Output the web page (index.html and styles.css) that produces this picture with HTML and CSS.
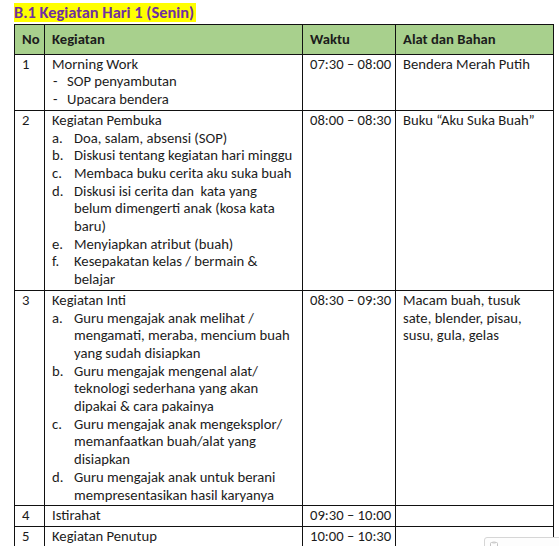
FILE: index.html
```html
<!DOCTYPE html>
<html lang="id">
<head>
<meta charset="utf-8">
<title>B.1 Kegiatan Hari 1 (Senin)</title>
<link rel="stylesheet" href="styles.css">
</head>
<body>
<div class="page">
  <h2 class="title"><span class="hl">B.1 Kegiatan Hari 1 (Senin)</span></h2>
  <table class="sched">
    <colgroup>
      <col class="c-no"><col class="c-keg"><col class="c-wkt"><col class="c-alat">
    </colgroup>
    <thead>
      <tr><th>No</th><th>Kegiatan</th><th>Waktu</th><th>Alat dan Bahan</th></tr>
    </thead>
    <tbody>
      <tr>
        <td>1</td>
        <td>
          <div class="line">Morning Work</div>
          <div class="item dash"><span class="mk">-</span><span class="tx">SOP penyambutan</span></div>
          <div class="item dash"><span class="mk">-</span><span class="tx">Upacara bendera</span></div>
        </td>
        <td>07:30 – 08:00</td>
        <td>Bendera Merah Putih</td>
      </tr>
      <tr>
        <td>2</td>
        <td>
          <div class="line">Kegiatan Pembuka</div>
          <div class="item"><span class="mk">a.</span><span class="tx">Doa, salam, absensi (SOP)</span></div>
          <div class="item"><span class="mk">b.</span><span class="tx">Diskusi tentang kegiatan hari minggu</span></div>
          <div class="item"><span class="mk">c.</span><span class="tx">Membaca buku cerita aku suka buah</span></div>
          <div class="item"><span class="mk">d.</span><span class="tx">Diskusi isi cerita dan&nbsp; kata yang<br>belum dimengerti anak (kosa kata<br>baru)</span></div>
          <div class="item"><span class="mk">e.</span><span class="tx">Menyiapkan atribut (buah)</span></div>
          <div class="item"><span class="mk">f.</span><span class="tx">Kesepakatan kelas / bermain &amp;<br>belajar</span></div>
        </td>
        <td>08:00 – 08:30</td>
        <td>Buku “Aku Suka Buah”</td>
      </tr>
      <tr>
        <td>3</td>
        <td>
          <div class="line">Kegiatan Inti</div>
          <div class="item"><span class="mk">a.</span><span class="tx">Guru mengajak anak melihat /<br>mengamati, meraba, mencium buah<br>yang sudah disiapkan</span></div>
          <div class="item"><span class="mk">b.</span><span class="tx">Guru mengajak mengenal alat/<br>teknologi sederhana yang akan<br>dipakai &amp; cara pakainya</span></div>
          <div class="item"><span class="mk">c.</span><span class="tx">Guru mengajak anak mengeksplor/<br>memanfaatkan buah/alat yang<br>disiapkan</span></div>
          <div class="item"><span class="mk">d.</span><span class="tx">Guru mengajak anak untuk berani<br>mempresentasikan hasil karyanya</span></div>
        </td>
        <td>08:30 – 09:30</td>
        <td>Macam buah, tusuk<br>sate, blender, pisau,<br>susu, gula, gelas</td>
      </tr>
      <tr>
        <td>4</td>
        <td>Istirahat</td>
        <td>09:30 – 10:00</td>
        <td></td>
      </tr>
      <tr>
        <td>5</td>
        <td>Kegiatan Penutup</td>
        <td>10:00 – 10:30</td>
        <td></td>
      </tr>
    </tbody>
  </table>
  <div class="paste-tip">
    <svg class="paste-icon" width="10" height="10" viewBox="0 0 10 10"><rect x="1.5" y="1.5" width="7" height="8" rx="1" fill="none" stroke="#c4c4c4" stroke-width="1"/><rect x="3.5" y="0.5" width="3" height="2" fill="#d0d0d0"/></svg>
    <span class="paste-dash"></span>
  </div>
</div>
</body>
</html>
```
FILE: styles.css
```css
html, body {
  margin: 0;
  padding: 0;
  background: #ffffff;
}
body {
  font-family: "Carlito", "Lato", "Liberation Sans", sans-serif;
  color: #1c1c1c;
  overflow: hidden;
  height: 546px;
}
.page {
  position: relative;
  padding: 3px 0 0 14px;
  height: 543px;
}
.title {
  margin: 0 0 2px 0;
  font-size: 16.4px;
  line-height: 19px;
  font-weight: bold;
  color: #7030a0;
}
.hl {
  background: #ffff00;
  display: inline-block;
  padding-right: 2px;
}
.sched {
  border-collapse: collapse;
  table-layout: fixed;
  width: 539px;
  font-size: 14.67px;
  line-height: 17.7px;
}
.c-no { width: 30px; }
.c-keg { width: 258px; }
.c-wkt { width: 93px; }
.c-alat { width: 158px; }
.sched th,
.sched td {
  border: 1px solid #111;
  vertical-align: top;
  text-align: left;
  padding: 1px 2px 1px 7px;
  white-space: nowrap;
}
.sched th {
  background: #a8d08d;
  font-weight: bold;
  padding-top: 6px;
  padding-bottom: 5px;
}
.item {
  display: flex;
}
.item .mk {
  flex: 0 0 22px;
}
.item.dash .mk {
  flex: 0 0 15px;
  padding-left: 1px;
  box-sizing: border-box;
}
.paste-tip {
  position: absolute;
  left: 484px;
  top: 537px;
  width: 90px;
  height: 20px;
  border: 1px solid #d6d6d6;
  border-radius: 3px;
  background: #fdfdfd;
  display: flex;
  align-items: flex-start;
  gap: 4px;
  padding: 3px 0 0 4px;
  box-sizing: border-box;
}
.paste-dash {
  width: 5px;
  height: 1px;
  margin-top: 6px;
  background: #d0d0d0;
}
```
